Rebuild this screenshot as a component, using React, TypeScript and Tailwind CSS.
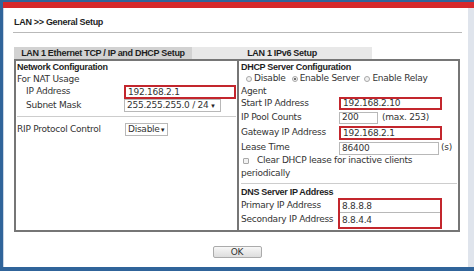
import React from "react";

const reg = "[font-family:'DejaVu_Sans',Verdana,sans-serif] text-[9px] tracking-[-0.25px] text-[#333]";
const bold = "[font-family:'Liberation_Sans',Arial,sans-serif] font-bold text-[9px] tracking-[-0.3px] text-[#1e1e1e]";

function Radio({ on }: { on?: boolean }) {
  return (
    <span className="w-[6px] h-[6px] rounded-full border border-[#a8a8a8] bg-[#f2f2f2] flex items-center justify-center shrink-0">
      {on ? <span className="w-[2px] h-[2px] rounded-full bg-[#444]" /> : null}
    </span>
  );
}

function Input({ value, red, w, h }: { value: string; red?: boolean; w: string; h: string }) {
  return (
    <div
      className={`${w} ${h} flex items-center pl-[2px] bg-white ${
        red ? "border-2 border-[#c3262d]" : "border border-[#b8b8b8]"
      }`}
    >
      <span className={`${reg} leading-none`}>{value}</span>
    </div>
  );
}

function Select({ value, w }: { value: string; w: string }) {
  return (
    <div className={`${w} h-[13px] flex items-center justify-between pl-[2px] pr-[4px] bg-white border border-[#b8b8b8]`}>
      <span className={`${reg} leading-none`}>{value}</span>
      <span className="text-[6px] leading-none text-[#222]">▼</span>
    </div>
  );
}

export default function App() {
  return (
    <div className="w-[474px] h-[271px] bg-[#30649a] flex flex-col overflow-hidden">
      <div className="h-[2px] shrink-0" />
      <div className="flex-1 flex flex-col pl-[3px] pb-[4px] min-h-0">
        <div className="h-[6px] bg-[#d6282b] shrink-0" />
        <div className="flex-1 flex min-h-0">
          <div className="flex-1 bg-white border-l border-[#c9d5e4] flex flex-col pl-[10px]">
            {/* title */}
            <div className={`${bold} mt-[8px] h-[12px] leading-[12px]`}>LAN &gt;&gt; General Setup</div>
            <div className="mt-[4px] h-px bg-[#b9b9b9] -ml-[1px] mr-[6px]" />
            {/* tabs */}
            <div className="mt-[14px] flex h-[12px]">
              <div className={`${bold} w-[178px] bg-[#d2d2d2] flex items-center justify-center leading-none`}>
                LAN 1 Ethernet TCP / IP and DHCP Setup
              </div>
              <div className={`${bold} w-[180px] bg-[#e8e8e8] flex items-center justify-center leading-none`}>
                LAN 1 IPv6 Setup
              </div>
            </div>
            {/* panel */}
            <div className="w-[446px] h-[173px] border-2 border-[#767676] flex">
              {/* left */}
              <div className="w-[221px] flex flex-col pl-[1px]">
                <div className={`${bold} h-[12px] leading-[12px]`}>Network Configuration</div>
                <div className={`${reg} h-[12px] leading-[12px]`}>For NAT Usage</div>
                <div className="h-[14px] flex items-center">
                  <div className={`${reg} w-[98px] ml-[9px]`}>IP Address</div>
                  <Input value="192.168.2.1" red w="w-[112px]" h="h-[14px]" />
                </div>
                <div className="h-[13px] flex items-center">
                  <div className={`${reg} w-[98px] ml-[9px]`}>Subnet Mask</div>
                  <Select value="255.255.255.0 / 24" w="w-[97px]" />
                </div>
                <div className="mt-[4px] h-px bg-[#cdcdcd] mr-[1px]" />
                <div className="mt-[6px] h-[13px] flex items-center">
                  <div className={`${reg} w-[108px]`}>RIP Protocol Control</div>
                  <Select value="Disable" w="w-[43px]" />
                </div>
              </div>
              {/* right */}
              <div className="flex-1 border-l-2 border-[#767676] flex flex-col pl-[2px]">
                <div className={`${bold} h-[12px] leading-[12px]`}>DHCP Server Configuration</div>
                <div className="h-[12px] flex items-center">
                  <span className="ml-[5px]"><Radio /></span>
                  <span className={`${reg} ml-[2px]`}>Disable</span>
                  <span className="ml-[6px]"><Radio on /></span>
                  <span className={`${reg} ml-[2px]`}>Enable Server</span>
                  <span className="ml-[5px]"><Radio /></span>
                  <span className={`${reg} ml-[2px]`}>Enable Relay</span>
                </div>
                <div className={`${reg} h-[12px] leading-[12px]`}>Agent</div>
                <div className="h-[13px] flex items-center">
                  <div className={`${reg} w-[98px]`}>Start IP Address</div>
                  <Input value="192.168.2.10" red w="w-[103px]" h="h-[13px]" />
                </div>
                <div className="mt-[1px] h-[13px] flex items-center">
                  <div className={`${reg} w-[98px]`}>IP Pool Counts</div>
                  <Input value="200" w="w-[39px]" h="h-[12px]" />
                  <span className={`${reg} ml-[4px]`}>(max. 253)</span>
                </div>
                <div className="mt-[2px] h-[14px] flex items-center">
                  <div className={`${reg} w-[98px]`}>Gateway IP Address</div>
                  <Input value="192.168.2.1" red w="w-[103px]" h="h-[14px]" />
                </div>
                <div className="mt-[1px] h-[14px] flex items-center">
                  <div className={`${reg} w-[98px]`}>Lease Time</div>
                  <Input value="86400" w="w-[100px]" h="h-[13px]" />
                  <span className={`${reg} ml-[2px]`}>(s)</span>
                </div>
                <div className="h-[12px] flex items-center">
                  <span className="ml-[2px] w-[6px] h-[6px] border border-[#a8a8a8] bg-[#f2f2f2] rounded-[1px] shrink-0" />
                  <span className={`${reg} ml-[8px]`}>Clear DHCP lease for inactive clients</span>
                </div>
                <div className={`${reg} h-[12px] leading-[12px]`}>periodically</div>
                <div className="mt-[4px] h-px bg-[#cdcdcd] mr-[1px]" />
                <div className={`${bold} mt-[3px] h-[11px] leading-[11px]`}>DNS Server IP Address</div>
                <div className="flex">
                  <div className="flex flex-col w-[97px]">
                    <div className={`${reg} h-[15px] flex items-center pt-[1px]`}>Primary IP Address</div>
                    <div className={`${reg} h-[14px] flex items-center`}>Secondary IP Address</div>
                  </div>
                  <div className="w-[104px] h-[31px] border-2 border-[#c3262d] flex flex-col">
                    <div className="h-[13px] flex items-center pl-[2px] border-b border-[#b8b8b8]">
                      <span className={`${reg} leading-none`}>8.8.8.8</span>
                    </div>
                    <div className="flex-1 flex items-center pl-[2px]">
                      <span className={`${reg} leading-none`}>8.8.4.4</span>
                    </div>
                  </div>
                </div>
              </div>
            </div>
            {/* OK */}
            <div className="w-[446px] flex justify-center mt-[14px]">
              <div className="w-[49px] h-[12px] border border-[#ababab] rounded-[2px] bg-gradient-to-b from-[#f7f7f7] to-[#dddddd] flex items-center justify-center">
                <span className={`${reg} leading-none text-[#222]`}>OK</span>
              </div>
            </div>
          </div>
          <div className="w-[6px] bg-[#dfe4ec] shrink-0" />
        </div>
      </div>
    </div>
  );
}
